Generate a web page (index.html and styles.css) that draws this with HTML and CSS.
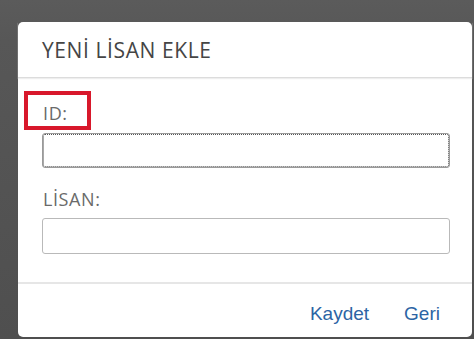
FILE: index.html
```html
<!DOCTYPE html>
<html lang="tr">
<head>
<meta charset="utf-8">
<link rel="stylesheet" href="styles.css">
</head>
<body>
<div class="overlay">
  <div class="dialog">
    <div class="dialog-header">
      <h1 class="dialog-title">YENİ LİSAN EKLE</h1>
    </div>
    <div class="dialog-body">
      <div class="field">
        <div class="label-wrap highlight"><label class="field-label">ID:</label></div>
        <div class="input focused"></div>
      </div>
      <div class="field">
        <div class="label-wrap"><label class="field-label">LİSAN:</label></div>
        <div class="input"></div>
      </div>
    </div>
    <div class="dialog-footer">
      <span class="btn">Kaydet</span>
      <span class="btn">Geri</span>
    </div>
  </div>
</div>
</body>
</html>
```

FILE: styles.css
```css
html, body {
  margin: 0;
  padding: 0;
}
body {
  width: 474px;
  height: 339px;
  overflow: hidden;
  background: #535353;
}
.overlay {
  height: 339px;
  padding: 22px 2px 2px 18px;
  box-sizing: border-box;
  background: linear-gradient(#5b5b5b 0, #575757 40px, #4f4f4f 100%);
}
.dialog {
  height: 100%;
  background: #fff;
  border-radius: 5px;
  display: flex;
  flex-direction: column;
  font-family: "Open Sans", "Noto Sans", sans-serif;
}
.dialog-header {
  height: 55px;
  flex: none;
  display: flex;
  align-items: center;
  padding-left: 24px;
  border-bottom: 1px solid #dcdcdc;
  box-shadow: 0 1px 1px #eeeeee;
}
.dialog-title {
  margin: 0;
  font-weight: 400;
  font-size: 21px;
  color: #454545;
  letter-spacing: 0.6px;
}
.dialog-body {
  flex: 1;
  padding: 13px 22px 0 6px;
}
.field + .field {
  margin-top: 8px;
}
.label-wrap {
  height: 39px;
  box-sizing: border-box;
  display: flex;
  align-items: center;
  padding-left: 19px;
  padding-top: 6px;
}
.label-wrap.highlight {
  width: 67px;
  border: 4px solid #d8182b;
  padding-left: 15px;
  padding-top: 4px;
}
.label-wrap + .input {
  margin-top: 3px;
}
.field-label {
  font-size: 18px;
  color: #6a6a6a;
  letter-spacing: 0.6px;
}
.input {
  margin-left: 18px;
  height: 36px;
  box-sizing: border-box;
  border: 1px solid #b9b9b9;
  border-radius: 3px;
  background: #fff;
}
.input.focused {
  height: 35px;
  border: 1px solid #9a9a9a;
  outline: 1px dotted #555;
  outline-offset: -2px;
}
.dialog-footer {
  height: 55px;
  flex: none;
  box-sizing: border-box;
  border-top: 2px solid #e6e6e6;
  display: flex;
  justify-content: flex-end;
  align-items: center;
  gap: 35px;
  padding-right: 32px;
  padding-top: 6px;
}
.btn {
  font-family: "Liberation Sans", Arial, sans-serif;
  font-size: 19px;
  color: #2c64a4;
}
```
